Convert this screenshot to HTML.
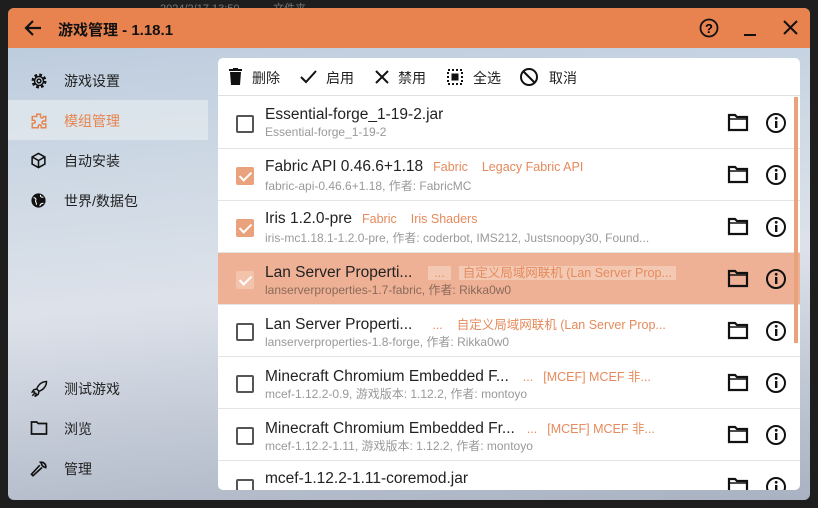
<!DOCTYPE html><html><head><meta charset="utf-8"><style>
*{margin:0;padding:0;box-sizing:border-box}
body{width:818px;height:508px;background:#1e1e1e;font-family:"Liberation Sans","Noto Sans CJK SC",sans-serif;position:relative;overflow:hidden}
.top{position:absolute;left:160px;top:0;color:#777;font-size:11px;white-space:nowrap}
.win{position:absolute;left:8px;top:8px;width:802px;height:492px;border-radius:6px;overflow:hidden;background:linear-gradient(175deg,#b9c9dc 0%,#cdd8e4 30%,#dde2ea 55%,#c5ccd8 75%,#a9b2c2 100%)}
.bar{position:absolute;left:0;top:0;width:802px;height:40px;background:#e8824f}
.bar .t{position:absolute;left:50px;top:11px;font-size:15px;font-weight:bold;color:#111}
.nav{position:absolute;left:0;width:200px;height:40px;font-size:14px;color:#222}
.nav span{position:absolute;left:56px;top:11px}
.nav svg{position:absolute;left:22px;top:12px}
.sel{background:rgba(230,235,240,.7);color:#e58550}
.card{position:absolute;left:210px;top:50px;width:582px;height:432px;background:#fff;border-radius:5px;overflow:hidden}
.tb{height:38px;border-bottom:1px solid #e0e0e0;position:relative;font-size:14px;color:#222}
.tb div{position:absolute;top:10px}
.row{position:absolute;left:0;width:582px;height:52px;border-bottom:1px solid #e4e4e4}
.cb{position:absolute;left:18px;top:18px;width:18px;height:18px;border:2px solid #555;border-radius:2px}
.ck{border:none;background:#eaa27d}
.ck:after{content:"";position:absolute;left:6px;top:2px;width:5px;height:10px;border:solid #fff;border-width:0 2px 2px 0;transform:rotate(45deg)}
.n{position:absolute;left:47px;top:9px;font-size:15.5px;color:#222;white-space:nowrap}
.s{position:absolute;left:47px;top:28px;font-size:12px;color:#999;white-space:nowrap}
.g{color:#e58a5c;font-size:12.5px;margin-left:10px}
</style></head><body>
<div class="top">2024/2/17 13:50 &nbsp; &nbsp; &nbsp; &nbsp; &nbsp; 文件夹</div>
<div class="win">
<div class="bar">
<svg style="position:absolute;left:16px;top:11px" width="18" height="18" viewBox="0 0 18 18"><path d="M17 9H2M9 2L2 9l7 7" stroke="#111" stroke-width="2.2" fill="none"/></svg>
<div class="t">游戏管理 - 1.18.1</div>
<svg style="position:absolute;left:691px;top:10px" width="20" height="20" viewBox="0 0 20 20"><circle cx="10" cy="10" r="8.5" stroke="#111" stroke-width="1.8" fill="none"/><text x="10" y="15" font-size="13" text-anchor="middle" font-family="Liberation Sans" font-weight="bold">?</text></svg>
<div style="position:absolute;left:736px;top:26px;width:12px;height:2px;background:#111"></div>
<svg style="position:absolute;left:775px;top:12px" width="15" height="15" viewBox="0 0 15 15"><path d="M1 1L14 14M14 1L1 14" stroke="#111" stroke-width="2"/></svg>
</div>
<div class="nav" style="top:52px"><svg width="18" height="18" viewBox="0 0 24 24"><circle cx="12" cy="12" r="8" fill="none" stroke="#111" stroke-width="4" stroke-dasharray="3.5 2.8"/><circle cx="12" cy="12" r="6" fill="none" stroke="#111" stroke-width="2"/><circle cx="12" cy="12" r="2.5" fill="none" stroke="#111" stroke-width="2"/></svg><span>游戏设置</span></div>
<div class="nav sel" style="top:92px"><svg width="18" height="18" viewBox="0 0 24 24"><path d="M9 3h5v3a2 2 0 004 0h3v6h-3a2 2 0 000 4h3v5h-6v-2a2 2 0 00-4 0v2H3v-6h2a2 2 0 000-4H3V6h6z" fill="none" stroke="#e58550" stroke-width="2"/></svg><span>模组管理</span></div>
<div class="nav" style="top:132px"><svg width="17" height="17" viewBox="0 0 24 24"><path d="M12 2l9 5v10l-9 5-9-5V7zM3 7l9 5 9-5M12 12v10" fill="none" stroke="#111" stroke-width="2.2"/></svg><span>自动安装</span></div>
<div class="nav" style="top:172px"><svg width="17" height="17" viewBox="0 0 24 24"><circle cx="12" cy="12" r="10" fill="#111"/><path d="M5 8c3 0 4 2 3 4s2 3 1 6M15 4c-1 3 2 4 4 3M14 20c0-3 2-4 5-4" stroke="#fff" stroke-width="1.5" fill="none"/></svg><span>世界/数据包</span></div>
<div class="nav" style="top:360px"><svg width="18" height="18" viewBox="0 0 24 24"><path d="M22 2c-6 0-11 4-13 10l3 3c6-2 10-7 10-13zM9 12l-4 1-2 3 4 0M12 15l-1 4-3 2 0-4M7 17l-4 4M9 19l-3 3" fill="none" stroke="#111" stroke-width="2"/></svg><span>测试游戏</span></div>
<div class="nav" style="top:400px"><svg width="18" height="16" viewBox="0 0 24 20"><path d="M2 2h7l2 2h11v14H2z" fill="none" stroke="#111" stroke-width="2.2"/></svg><span>浏览</span></div>
<div class="nav" style="top:440px"><svg width="18" height="18" viewBox="0 0 24 24"><path d="M14 3a6 6 0 017 7l-3-1-2-2-1-3zM16 10l-12 11-2-2 11-12" fill="none" stroke="#111" stroke-width="2.2"/></svg><span>管理</span></div>

<div class="card">
<div class="tb">
<svg style="position:absolute;left:11px;top:10px" width="13" height="17" viewBox="0 0 13 17"><rect x="0" y="1" width="13" height="2" fill="#111"/><rect x="4" y="0" width="5" height="2" fill="#111"/><path d="M1 4h11l-1 13H2z" fill="#111"/></svg><div style="left:34px">删除</div>
<svg style="position:absolute;left:82px;top:12px" width="17" height="14" viewBox="0 0 17 14"><path d="M1 7l5 5L16 1" stroke="#111" stroke-width="2" fill="none"/></svg><div style="left:108px">启用</div>
<svg style="position:absolute;left:157px;top:12px" width="14" height="14" viewBox="0 0 14 14"><path d="M1 1l12 12M13 1L1 13" stroke="#111" stroke-width="2"/></svg><div style="left:180px">禁用</div>
<svg style="position:absolute;left:229px;top:11px" width="16" height="16" viewBox="0 0 16 16"><rect x="1" y="1" width="14" height="14" fill="none" stroke="#111" stroke-width="2" stroke-dasharray="2 2"/><rect x="4.5" y="4.5" width="7" height="7" fill="#111"/></svg><div style="left:255px">全选</div>
<svg style="position:absolute;left:302px;top:10px" width="18" height="18" viewBox="0 0 18 18"><circle cx="9" cy="9" r="8" fill="none" stroke="#111" stroke-width="2"/><path d="M3.5 3.5l11 11" stroke="#111" stroke-width="2"/></svg><div style="left:331px">取消</div>
</div>

<div class="row" style="top:39px"><div class="cb"></div><div class="n">Essential-forge_1-19-2.jar</div><div class="s">Essential-forge_1-19-2</div></div>
<div class="row" style="top:91px"><div class="cb ck"></div><div class="n">Fabric API 0.46.6+1.18<span class="g">Fabric</span><span class="g" style="margin-left:14px">Legacy Fabric API</span></div><div class="s">fabric-api-0.46.6+1.18, 作者: FabricMC</div></div>
<div class="row" style="top:143px"><div class="cb ck"></div><div class="n">Iris 1.2.0-pre<span class="g">Fabric</span><span class="g" style="margin-left:14px">Iris Shaders</span></div><div class="s">iris-mc1.18.1-1.2.0-pre, 作者: coderbot, IMS212, Justsnoopy30, Found...</div></div>
<div class="row" style="top:195px;background:#eeb196"><div class="cb ck" style="background:#f3c3ab"></div><div class="n">Lan Server Properti...<span class="g" style="background:#f4c9b4;padding:0 6px;margin-left:16px">...</span><span class="g" style="background:#f4c9b4;padding:0 4px;margin-left:8px">自定义局域网联机 (Lan Server Prop...</span></div><div class="s" style="color:#8a6a5a">lanserverproperties-1.7-fabric, 作者: Rikka0w0</div></div>
<div class="row" style="top:247px"><div class="cb"></div><div class="n">Lan Server Properti...<span class="g" style="margin-left:20px">...</span><span class="g" style="margin-left:14px">自定义局域网联机 (Lan Server Prop...</span></div><div class="s">lanserverproperties-1.8-forge, 作者: Rikka0w0</div></div>
<div class="row" style="top:299px"><div class="cb"></div><div class="n">Minecraft Chromium Embedded F...<span class="g" style="margin-left:14px">...</span><span class="g">[MCEF] MCEF 非...</span></div><div class="s">mcef-1.12.2-0.9, 游戏版本: 1.12.2, 作者: montoyo</div></div>
<div class="row" style="top:351px"><div class="cb"></div><div class="n">Minecraft Chromium Embedded Fr...<span class="g" style="margin-left:12px">...</span><span class="g">[MCEF] MCEF 非...</span></div><div class="s">mcef-1.12.2-1.11, 游戏版本: 1.12.2, 作者: montoyo</div></div>
<div class="row" style="top:403px"><div class="cb"></div><div class="n">mcef-1.12.2-1.11-coremod.jar</div></div>
<div style="position:absolute;left:576px;top:39px;width:4px;height:246px;background:#eaa27d;z-index:5"></div>
</div>
</div>
<svg width="818" height="508" style="position:absolute;left:0;top:0">
<defs><g id="f"><path d="M1 2h6l2 2h10v13H1z" fill="none" stroke="#111" stroke-width="2.2"/><path d="M1 6h18" stroke="#111" stroke-width="1.5"/></g>
<g id="i"><circle cx="10" cy="10" r="9" fill="none" stroke="#111" stroke-width="2"/><rect x="9" y="8" width="2.4" height="7" fill="#111"/><circle cx="10.2" cy="5.3" r="1.4" fill="#111"/></g>
<clipPath id="c"><rect x="0" y="0" width="818" height="490"/></clipPath></defs>
<use href="#f" x="728" y="113"/><use href="#i" x="766" y="113"/>
<use href="#f" x="728" y="165"/><use href="#i" x="766" y="165"/>
<use href="#f" x="728" y="217"/><use href="#i" x="766" y="217"/>
<use href="#f" x="728" y="269"/><use href="#i" x="766" y="269"/>
<use href="#f" x="728" y="321"/><use href="#i" x="766" y="321"/>
<use href="#f" x="728" y="373"/><use href="#i" x="766" y="373"/>
<use href="#f" x="728" y="425"/><use href="#i" x="766" y="425"/>
<g clip-path="url(#c)"><use href="#f" x="728" y="477"/><use href="#i" x="766" y="477"/></g>
</svg>
</body></html>
